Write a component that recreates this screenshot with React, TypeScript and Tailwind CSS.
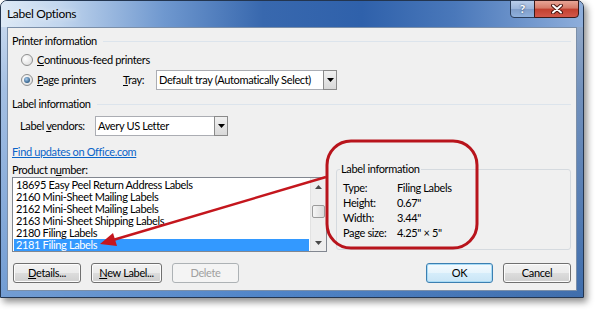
import React from "react";

function Key({ children }: { children: React.ReactNode }) {
  return <span className="underline decoration-1 underline-offset-[1px]">{children}</span>;
}

function Radio({ checked, children, className = "" }: { checked?: boolean; children: React.ReactNode; className?: string }) {
  return (
    <div className={`flex items-center h-[20px] whitespace-nowrap ${className}`}>
      <span className="flex items-center justify-center w-[12px] h-[12px] rounded-full border border-[#8e8f8f] bg-[radial-gradient(circle_at_35%_35%,#ffffff,#d8d8d8)]">
        {checked && (
          <span className="w-[6px] h-[6px] rounded-full bg-[radial-gradient(circle_at_40%_35%,#a9cdee,#2b5a85_75%)]" />
        )}
      </span>
      <span className="ml-[4px]">{children}</span>
    </div>
  );
}

function Arrow({ up }: { up?: boolean }) {
  return (
    <svg width="7" height="4" viewBox="0 0 7 4">
      <path d={up ? "M0 4h7L3.5 0z" : "M0 0h7L3.5 4z"} fill="#4a4a4a" />
    </svg>
  );
}

function Combo({ text, className = "" }: { text: string; className?: string }) {
  return (
    <div className={`flex h-[20px] bg-white border border-[#abadb3] ${className}`}>
      <span className="flex-1 pl-[2px] leading-[18px] whitespace-nowrap overflow-hidden">{text}</span>
      <span className="flex items-center justify-center w-[14px] -my-px -mr-px border border-[#8a8a8a] bg-[linear-gradient(180deg,#f0f0f0,#d9d9d9)]">
        <svg width="7" height="4" viewBox="0 0 7 4">
          <path d="M0 0h7L3.5 4z" fill="#000" />
        </svg>
      </span>
    </div>
  );
}

function GroupHeader({ title }: { title: string }) {
  return (
    <div className="flex items-center h-[16px] whitespace-nowrap">
      <span>{title}</span>
      <span className="flex-1 h-px ml-[6px] bg-[#dce4ec]" />
    </div>
  );
}

function Button({ children, className = "", kind = "normal" }: { children: React.ReactNode; className?: string; kind?: "normal" | "default" | "disabled" }) {
  const look =
    kind === "default"
      ? "border-[#3c7fb1] bg-[linear-gradient(180deg,#f4fafe_0%,#e6f4fc_50%,#d6edfa_50%,#c9e5f6_100%)] shadow-[inset_0_0_0_1px_#a8dbf6]"
      : kind === "disabled"
      ? "border-[#adb2b5] bg-[#f4f4f4] text-[#a0a0a0]"
      : "border-[#707070] bg-[linear-gradient(180deg,#f2f2f2_0%,#ebebeb_50%,#dddddd_50%,#cfcfcf_100%)] shadow-[inset_0_0_0_1px_#fcfcfc]";
  return (
    <div className={`flex items-center justify-center h-[20px] rounded-[3px] border whitespace-nowrap ${look} ${className}`}>
      {children}
    </div>
  );
}

const items = [
  "18695 Easy Peel Return Address Labels",
  "2160 Mini-Sheet Mailing Labels",
  "2162 Mini-Sheet Mailing Labels",
  "2163 Mini-Sheet Shipping Labels",
  "2180 Filing Labels",
  "2181 Filing Labels",
];

const info = [
  ["Type:", "Filing Labels"],
  ["Height:", "0.67\""],
  ["Width:", "3.44\""],
  ["Page size:", "4.25\" \u00d7 5\""],
];

export default function App() {
  return (
    <div className="relative w-[599px] h-[312px] bg-white overflow-hidden text-[11px] tracking-[-0.35px] text-black font-['Lato',sans-serif]">
      <div className="flex flex-col w-[584px] h-[298px] rounded-t-[7px] border border-[#23354f] shadow-[3px_4px_7px_rgba(0,0,0,0.45)] bg-[linear-gradient(90deg,rgba(255,255,255,0.2),rgba(255,255,255,0)_45%,rgba(0,20,60,0.2)),linear-gradient(180deg,#c6d8ef_0%,#8eb0dc_30%,#4f84c8_100%)]">
        {/* title bar */}
        <div className="flex h-[26px] rounded-t-[6px] bg-[linear-gradient(90deg,#dde9f6_0%,#c2d6ee_10%,#6f98cf_28%,#3868ae_45%,#2f61ab_62%,#4a78ba_78%,#8eaedb_100%)]">
          <span className="self-center pl-[6px] text-[12px] tracking-[-0.3px] [text-shadow:0_0_6px_#ffffff]">Label Options</span>
          <div className="flex ml-auto mr-[4px] -mt-px h-[18px] tracking-normal">
            <div className="flex items-center justify-center w-[25px] border border-[#2a3d5a] rounded-bl-[4px] bg-[linear-gradient(180deg,#b9cde9_0%,#9ab4da_50%,#7f9dc9_50%,#8fb0dc_100%)] text-white font-bold text-[12px] [text-shadow:0_0_2px_#1b2f4f]">
              ?
            </div>
            <div className="flex items-center justify-center w-[45px] -ml-px border border-[#3a1a1a] rounded-br-[4px] bg-[linear-gradient(180deg,#e8a596_0%,#d67a68_45%,#c2402f_50%,#d2574a_100%)]">
              <svg width="12" height="10" viewBox="0 0 12 10">
                <path d="M2 1.5l8 7M10 1.5l-8 7" stroke="#4a1510" strokeWidth="4" strokeLinecap="round" />
                <path d="M2 1.5l8 7M10 1.5l-8 7" stroke="#ffffff" strokeWidth="2" strokeLinecap="round" />
              </svg>
            </div>
          </div>
        </div>

        {/* client */}
        <div className="flex flex-col flex-1 mx-[6px] mb-[6px] border border-[#7b8fa9] bg-[#f0f0f0] pl-[4px] pr-[5px] pt-[5px]">
          <GroupHeader title="Printer information" />
          <Radio className="ml-[9px] mt-px">
            <Key>C</Key>ontinuous-feed printers
          </Radio>
          <div className="flex items-center h-[20px] ml-[9px]">
            <Radio checked className="w-[102px]">
              <Key>P</Key>age printers
            </Radio>
            <span className="w-[33px]">
              <Key>T</Key>ray:
            </span>
            <Combo text="Default tray (Automatically Select)" className="w-[181px]" />
          </div>

          <div className="mt-[6px]">
            <GroupHeader title="Label information" />
          </div>
          <div className="flex items-center h-[20px] mt-[4px] ml-[8px]">
            <span className="w-[75px] whitespace-nowrap">
              Label <Key>v</Key>endors:
            </span>
            <Combo text="Avery US Letter" className="w-[133px]" />
          </div>

          <div className="flex gap-[9px]">
            <div className="flex flex-col w-[315px]">
              <span className="mt-[8px] h-[16px] leading-[16px] text-[#0a64c8] underline underline-offset-[1px] whitespace-nowrap">
                Find updates on Office.com
              </span>
              <span className="mt-[3px] h-[14px] leading-[14px] whitespace-nowrap">
                Product n<Key>u</Key>mber:
              </span>
              <div className="flex h-[75px] border border-[#828790] bg-white">
                <div className="flex flex-col flex-1 pt-px px-px">
                  {items.map((it, i) => (
                    <div
                      key={it}
                      className={`h-[12px] leading-[12px] pl-[2px] whitespace-nowrap ${
                        i === items.length - 1 ? "bg-[#3399ff] text-white" : ""
                      }`}
                    >
                      {it}
                    </div>
                  ))}
                </div>
                <div className="flex flex-col w-[16px] bg-[#eeeeee] border-l border-[#e2e2e2]">
                  <div className="flex items-center justify-center h-[17px]">
                    <Arrow up />
                  </div>
                  <div className="flex-1">
                    <div className="mt-[10px] mx-px h-[13px] rounded-[2px] border border-[#9b9b9b] bg-[linear-gradient(90deg,#f6f6f6,#dadada)]" />
                  </div>
                  <div className="flex items-center justify-center h-[17px]">
                    <Arrow />
                  </div>
                </div>
              </div>
            </div>

            <div className="relative mt-[33px] flex-1 h-[81px] rounded-[3px] border border-[#d5dadf]">
              <span className="absolute -top-[8px] left-[3px] px-[1px] bg-[#f0f0f0] leading-[14px] whitespace-nowrap">Label information</span>
              <div className="flex flex-col pt-[10px] pl-[6px]">
                {info.map(([k, v]) => (
                  <div key={k} className="flex h-[15px] leading-[15px] whitespace-nowrap">
                    <span className="w-[54px]">{k}</span>
                    <span>{v}</span>
                  </div>
                ))}
              </div>
            </div>
          </div>

          <div className="flex mt-[11px]">
            <Button className="w-[68px] ml-px">
              <Key>D</Key>etails...
            </Button>
            <Button className="w-[71px] ml-[10px]">
              <Key>N</Key>ew Label...
            </Button>
            <Button kind="disabled" className="w-[67px] ml-[10px]">
              Delete
            </Button>
            <Button kind="default" className="w-[67px] ml-auto">
              OK
            </Button>
            <Button className="w-[68px] ml-[10px]">Cancel</Button>
          </div>
        </div>
      </div>

      {/* annotation */}
      <svg className="absolute inset-0 pointer-events-none" width="599" height="312" viewBox="0 0 599 312">
        <rect x="327" y="141" width="150" height="107" rx="24" fill="none" stroke="#b8141c" strokeWidth="3" />
        <path d="M326 177L113 240" stroke="#c4161d" strokeWidth="2.5" />
        <path d="M100 244L113 233L117 246z" fill="#c4161d" />
      </svg>
    </div>
  );
}
